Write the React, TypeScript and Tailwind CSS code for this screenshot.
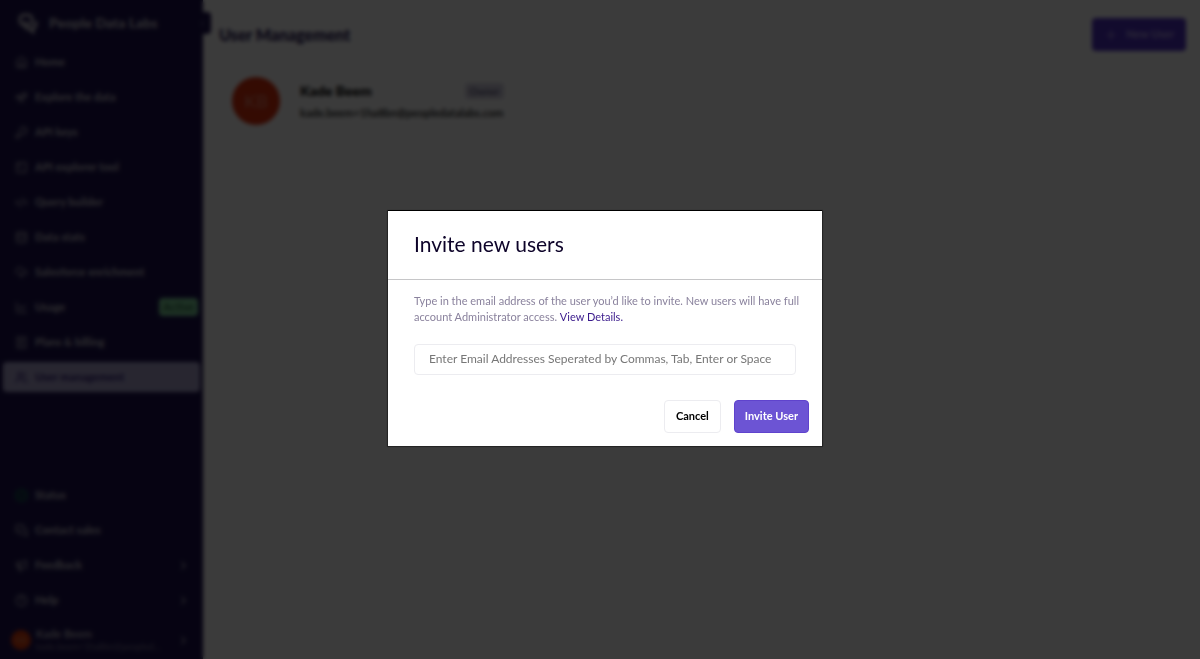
import type { ReactNode } from 'react';
import {
  ChartLine, ChevronLeft, ChevronRight, CircleCheck, CircleHelp, CloudUpload, CodeXml, Database, House,
  KeyRound, Megaphone, MessagesSquare, Plus, ReceiptText, Telescope, SquareTerminal, Users,
} from 'lucide-react';

type Item = { label: string; icon: ReactNode; badge?: string; active?: boolean; more?: boolean };

const mainItems: Item[] = [
  { label: 'Home', icon: <House size={13} /> },
  { label: 'Explore the data', icon: <Telescope size={13} /> },
  { label: 'API keys', icon: <KeyRound size={13} /> },
  { label: 'API explorer tool', icon: <SquareTerminal size={13} /> },
  { label: 'Query builder', icon: <CodeXml size={13} /> },
  { label: 'Data stats', icon: <Database size={13} /> },
  { label: 'Salesforce enrichment', icon: <CloudUpload size={13} /> },
  { label: 'Usage', icon: <ChartLine size={13} />, badge: 'Active' },
  { label: 'Plans & billing', icon: <ReceiptText size={13} /> },
  { label: 'User management', icon: <Users size={13} />, active: true },
];

const footerItems: Item[] = [
  { label: 'Status', icon: <CircleCheck size={13} className="text-green-600" /> },
  { label: 'Contact sales', icon: <MessagesSquare size={13} /> },
  { label: 'Feedback', icon: <Megaphone size={13} />, more: true },
  { label: 'Help', icon: <CircleHelp size={13} />, more: true },
];

function NavItem({ label, icon, badge, active, more }: Item) {
  return (
    <a
      href="#"
      className={`flex h-[30px] items-center gap-[7px] rounded pl-3 text-[11px] font-black ${
        active ? 'bg-[#aca5d0] text-[#3d2a80]' : 'text-[#b8b4c0]'
      }`}
    >
      {icon}
      <span className="flex-1">{label}</span>
      {badge && (
        <span className="mr-0.5 rounded bg-[#80d49c] px-1 text-[11px] leading-[18px] font-normal text-[#1d5233]">{badge}</span>
      )}
      {more && <ChevronRight size={13} className="mr-2.5" />}
    </a>
  );
}

function Sidebar() {
  return (
    <aside className="relative flex w-[203px] shrink-0 flex-col bg-[#1c1150] px-[3px]">
      <div className="flex h-[47px] items-center gap-2.5 pl-3.5 pb-0.5 text-[#c4c0cc]">
        <svg width="22" height="22" viewBox="0 0 22 22" fill="none" stroke="currentColor" strokeWidth="3" aria-hidden="true">
          <rect x="3" y="3" width="12" height="10" rx="4" />
          <path d="M8 9v4a4 4 0 0 0 4 4h1l3 3v-4a4 4 0 0 0 3-4V9" />
        </svg>
        <span className="text-sm font-black">People Data Labs</span>
      </div>
      <button
        type="button"
        aria-label="Collapse sidebar"
        className="absolute -right-2 top-3 flex h-[22px] w-[18px] items-center justify-center rounded bg-[#1c1150] text-[#8b83ab]"
      >
        <ChevronLeft size={11} />
      </button>
      <nav className="flex flex-col gap-[5px]">
        {mainItems.map((item) => <NavItem key={item.label} {...item} />)}
      </nav>
      <nav className="mt-auto flex flex-col gap-[5px]">
        {footerItems.map((item) => <NavItem key={item.label} {...item} />)}
      </nav>
      <a href="#" className="flex h-11 items-center gap-[5px] pl-2 pt-1.5 text-[#b0abba]">
        <span className="flex size-5 items-center justify-center rounded-full bg-[#d93a0c] text-[8px] text-[#e8915c]">KB</span>
        <span className="flex flex-1 flex-col">
          <span className="text-[11px] leading-[14px] font-bold">Kade Beem</span>
          <span className="text-[9px] leading-3 text-[#7a7290]">kade.beem+1ha8bn@peopled...</span>
        </span>
        <ChevronRight size={13} className="mr-2.5" />
      </a>
    </aside>
  );
}

export default function App() {
  return (
    <div className="flex min-h-screen bg-white font-['Lato','Open_Sans',sans-serif]">
      <Sidebar />
      <main className="flex-1 px-4 pt-[18px]">
        <header className="flex items-center justify-between">
          <h1 className="text-base font-black text-[#1c1150]">User Management</h1>
          <button
            type="button"
            className="-mr-0.5 flex h-[33px] items-center gap-2 rounded bg-[#5030c4] px-3 text-[11px] font-bold text-[#b6a6ee]"
          >
            <Plus size={14} />
            New User
          </button>
        </header>
        <section className="flex items-center gap-5 pl-[13px] pt-[26px]">
          <span className="flex size-12 items-center justify-center rounded-full bg-[#df2f0c] text-lg text-[#ec8a72]">KB</span>
          <div className="flex flex-col gap-1">
            <div className="flex items-center justify-between">
              <h2 className="text-sm font-black text-black">Kade Beem</h2>
              <span className="rounded bg-[#d3d0e0] px-1 text-[10px] leading-4 text-[#3d3763]">Owner</span>
            </div>
            <p className="text-[11px] leading-4 font-bold text-[#333]">kade.beem+1ha8bn@peopledatalabs.com</p>
          </div>
        </section>
      </main>

      <div className="fixed inset-0 flex items-center justify-center bg-black/77 pb-0.5 pl-2.5 backdrop-blur-[2px]">
        <div
          role="dialog"
          aria-modal="true"
          aria-labelledby="invite-title"
          className="w-full max-w-[434px] bg-white shadow-[0_-1px_0_0_#000,0_0_1px_1px_rgba(0,0,0,0.4)]"
        >
          <div className="border-b border-[#c6c6c8] px-[26px] pt-[17px] pb-[19px]">
            <h2 id="invite-title" className="text-[21px] leading-8 text-[#0d0329]">Invite new users</h2>
          </div>
          <form onSubmit={(e) => e.preventDefault()}>
            <div className="px-[26px] pt-[13px]">
              <p className="-mr-4 text-[11px] leading-4 text-[#8a829d]">
                Type in the email address of the user you’d like to invite. New users will have full account
                Administrator access. <a href="#" className="inline-block text-[#3a1a8c]">View Details.</a>
              </p>
              <input
                type="text"
                aria-label="Email addresses"
                placeholder="Enter Email Addresses Seperated by Commas, Tab, Enter or Space"
                className="mt-[19px] block h-[31px] w-full rounded border border-[#ececf0] pb-0.5 pl-3.5 text-xs outline-none placeholder:text-[#777]"
              />
            </div>
            <div className="flex justify-end gap-[13px] px-[13px] pt-[25px] pb-[13px]">
              <button type="button" className="h-[33px] rounded border border-[#ececf0] px-[11px] text-[11px] font-bold text-black">
                Cancel
              </button>
              <button type="submit" className="h-[33px] rounded border border-[#5f43cd] bg-[#6c54d4] px-2.5 text-[11px] font-bold text-white">
                Invite User
              </button>
            </div>
          </form>
        </div>
      </div>
    </div>
  );
}
